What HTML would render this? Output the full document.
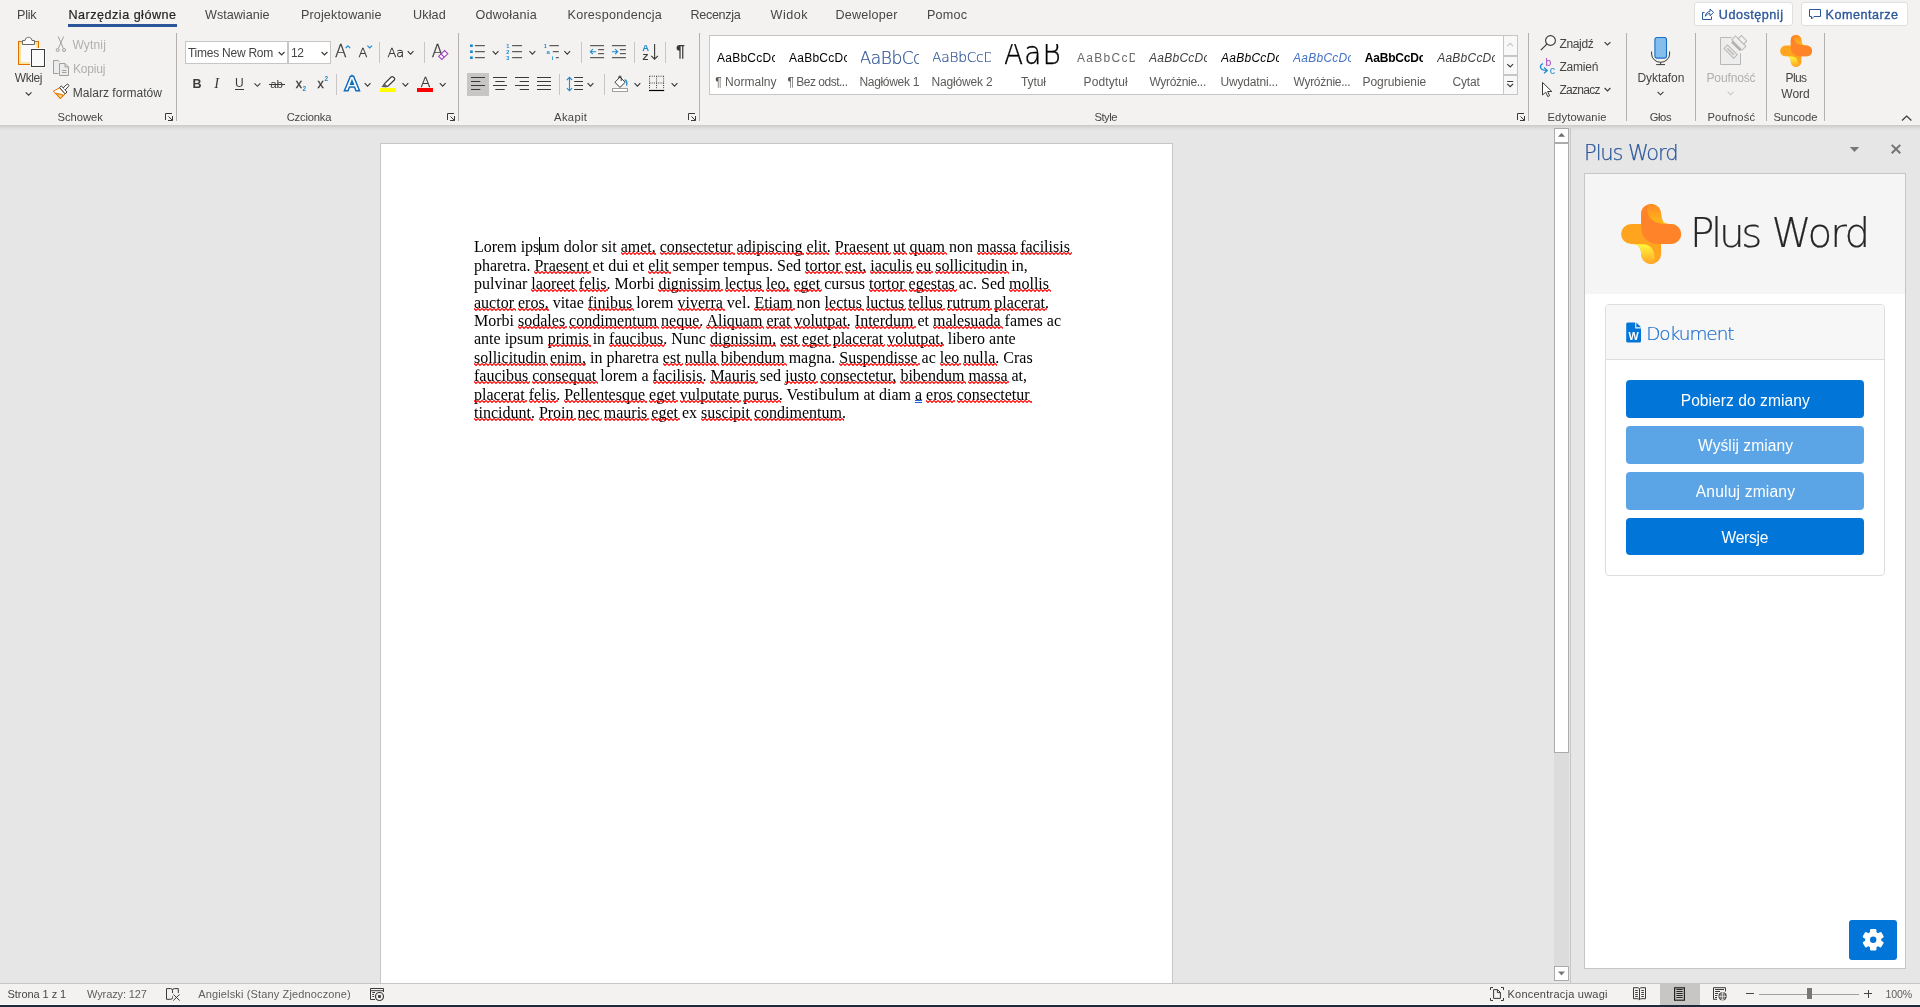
<!DOCTYPE html>
<html lang="pl"><head><meta charset="utf-8"><title>Word - Plus Word</title>
<style>
html,body{margin:0;padding:0;}
body{width:1920px;height:1007px;overflow:hidden;position:relative;background:#e6e6e6;font-family:"Liberation Sans",sans-serif;}
.t{position:absolute;white-space:pre;line-height:20px;}
.root{position:absolute;left:0;top:0;width:1920px;height:1007px;will-change:transform;}
.a{position:absolute;}
.sep{position:absolute;width:1px;background:#c8c6c4;}
.gs{position:absolute;width:1px;top:33px;height:88px;background:#b3b0ad;}
svg{position:absolute;overflow:visible;}
.ln{position:absolute;left:474px;white-space:pre;font-family:"Liberation Serif",serif;font-size:16px;line-height:20px;color:#000;}

.btn{position:absolute;left:1626px;width:238px;height:38px;border-radius:4px;background:#0275d8;}
.btn.d{background:#5ba4e5;}
</style></head><body><div class="root">
<div class="a" style="left:0;top:0;width:1920px;height:125px;background:#f3f2f1"></div>
<div class="a" style="left:0;top:125px;width:1920px;height:1px;background:#cdcccb"></div>
<div class="a" style="left:0;top:126px;width:1920px;height:1px;background:#d3d3d3"></div>
<div class="a" style="left:0;top:127px;width:1920px;height:1px;background:#d9d9d9"></div>
<div class="a" style="left:0;top:128px;width:1920px;height:1px;background:#dedede"></div>
<div class="a" style="left:0;top:129px;width:1920px;height:1px;background:#e2e2e2"></div>
<div class="a" style="left:0;top:130px;width:1920px;height:1px;background:#e4e4e4"></div>
<span class="t" style="left:17.00px;top:4.63px;font-size:12.6px;color:#484644;letter-spacing:-0.266px;">Plik</span>
<span class="t" style="left:205.00px;top:4.63px;font-size:12.6px;color:#484644;letter-spacing:0.012px;">Wstawianie</span>
<span class="t" style="left:301.00px;top:4.63px;font-size:12.6px;color:#484644;letter-spacing:0.116px;">Projektowanie</span>
<span class="t" style="left:413.00px;top:4.63px;font-size:12.6px;color:#484644;letter-spacing:0.124px;">Układ</span>
<span class="t" style="left:475.50px;top:4.63px;font-size:12.6px;color:#484644;letter-spacing:0.217px;">Odwołania</span>
<span class="t" style="left:567.50px;top:4.63px;font-size:12.6px;color:#484644;letter-spacing:0.248px;">Korespondencja</span>
<span class="t" style="left:690.50px;top:4.63px;font-size:12.6px;color:#484644;letter-spacing:-0.324px;">Recenzja</span>
<span class="t" style="left:770.50px;top:4.63px;font-size:12.6px;color:#484644;letter-spacing:0.500px;">Widok</span>
<span class="t" style="left:835.50px;top:4.63px;font-size:12.6px;color:#484644;letter-spacing:0.225px;">Deweloper</span>
<span class="t" style="left:927.00px;top:4.63px;font-size:12.6px;color:#484644;letter-spacing:0.199px;">Pomoc</span>
<span class="t" style="left:68.50px;top:4.63px;font-size:12.6px;color:#252423;letter-spacing:0.493px;-webkit-text-stroke:0.2px #252423;">Narzędzia główne</span>
<div class="a" style="left:68px;top:24px;width:109px;height:3px;background:#2b579a"></div>
<div class="a" style="left:1694px;top:2px;width:99px;height:24px;background:#fff;border:1px solid #e1dfdd;border-radius:3px;box-sizing:border-box"></div>
<div class="a" style="left:1801px;top:2px;width:107px;height:24px;background:#fff;border:1px solid #e1dfdd;border-radius:3px;box-sizing:border-box"></div>
<span class="t" style="left:1718.80px;top:4.63px;font-size:12.6px;color:#2b579a;letter-spacing:0.520px;-webkit-text-stroke:0.35px #2b579a;">Udostępnij</span>
<span class="t" style="left:1825.50px;top:4.63px;font-size:12.6px;color:#2b579a;letter-spacing:0.510px;-webkit-text-stroke:0.35px #2b579a;">Komentarze</span>
<div class="gs" style="left:176px"></div>
<div class="gs" style="left:458px"></div>
<div class="gs" style="left:699px"></div>
<div class="gs" style="left:1528px"></div>
<div class="gs" style="left:1626px"></div>
<div class="gs" style="left:1695px"></div>
<div class="gs" style="left:1766px"></div>
<div class="gs" style="left:1824px"></div>
<div class="sep" style="left:379px;top:42px;height:21px"></div>
<div class="sep" style="left:424px;top:42px;height:21px"></div>
<div class="sep" style="left:581px;top:42px;height:21px"></div>
<div class="sep" style="left:634px;top:42px;height:21px"></div>
<div class="sep" style="left:665px;top:42px;height:21px"></div>
<div class="sep" style="left:336px;top:74px;height:21px"></div>
<div class="sep" style="left:559px;top:74px;height:21px"></div>
<div class="sep" style="left:604px;top:74px;height:21px"></div>
<span class="t" style="left:57.60px;top:107.12px;font-size:11.2px;color:#444;letter-spacing:-0.034px;">Schowek</span>
<span class="t" style="left:286.70px;top:107.12px;font-size:11.2px;color:#444;letter-spacing:-0.188px;">Czcionka</span>
<span class="t" style="left:554.10px;top:107.12px;font-size:11.2px;color:#444;letter-spacing:0.341px;">Akapit</span>
<span class="t" style="left:1094.40px;top:107.12px;font-size:11.2px;color:#444;letter-spacing:-0.444px;">Style</span>
<span class="t" style="left:1547.50px;top:107.12px;font-size:11.2px;color:#444;letter-spacing:0.128px;">Edytowanie</span>
<span class="t" style="left:1649.75px;top:107.12px;font-size:11.2px;color:#444;letter-spacing:-0.422px;">Głos</span>
<span class="t" style="left:1707.50px;top:107.12px;font-size:11.2px;color:#444;letter-spacing:0.121px;">Poufność</span>
<span class="t" style="left:1773.40px;top:107.12px;font-size:11.2px;color:#444;letter-spacing:-0.012px;">Suncode</span>
<span class="t" style="left:14.70px;top:67.84px;font-size:12px;color:#444;letter-spacing:-0.386px;">Wklej</span>
<span class="t" style="left:72.50px;top:34.84px;font-size:12px;color:#b1afad;letter-spacing:0.147px;">Wytnij</span>
<span class="t" style="left:73.00px;top:58.84px;font-size:12px;color:#b1afad;letter-spacing:-0.172px;">Kopiuj</span>
<span class="t" style="left:72.80px;top:82.84px;font-size:12px;color:#444;letter-spacing:0.029px;">Malarz formatów</span>
<div class="a" style="left:185px;top:41px;width:103px;height:23px;background:#fff;border:1px solid #c8c6c4;box-sizing:border-box"></div>
<div class="a" style="left:288px;top:41px;width:43px;height:23px;background:#fff;border:1px solid #c8c6c4;box-sizing:border-box"></div>
<span class="t" style="left:187.90px;top:42.84px;font-size:12px;color:#444;letter-spacing:-0.236px;">Times New Rom</span>
<span class="t" style="left:291.00px;top:42.84px;font-size:12px;color:#444;letter-spacing:-0.359px;">12</span>
<span class="t" style="left:192.40px;top:73.67px;font-size:12.5px;color:#3b3a39;font-weight:700;">B</span>
<span class="t" style="left:214.20px;top:73.11px;font-size:14.5px;color:#3b3a39;font-style:italic;font-family:'Liberation Serif', serif;">I</span>
<span class="t" style="left:235.00px;top:73.34px;font-size:12px;color:#3b3a39;">U</span>
<div class="a" style="left:235px;top:89px;width:9px;height:1px;background:#3b3a39"></div>
<span class="t" style="left:270.30px;top:74.02px;font-size:11.5px;color:#3b3a39;letter-spacing:-0.097px;">ab</span>
<div class="a" style="left:268.8px;top:84px;width:16px;height:1px;background:#3b3a39"></div>
<span class="t" style="left:295.70px;top:73.67px;font-size:12.5px;color:#3b3a39;-webkit-text-stroke:0.3px #3b3a39;">x</span>
<span class="t" style="left:302.50px;top:79.25px;font-size:6.5px;color:#1e8bcd;font-weight:700;">2</span>
<span class="t" style="left:317.50px;top:73.67px;font-size:12.5px;color:#3b3a39;-webkit-text-stroke:0.3px #3b3a39;">x</span>
<span class="t" style="left:324.50px;top:68.75px;font-size:6.5px;color:#1e8bcd;font-weight:700;">2</span>
<span class="t" style="left:334.90px;top:41.12px;font-size:17px;color:#3b3a39;font-weight:200;font-family:'DejaVu Sans', sans-serif;-webkit-text-stroke:0.35px #3b3a39;">A</span>
<span class="t" style="left:358.50px;top:42.50px;font-size:13px;color:#3b3a39;font-weight:200;font-family:'DejaVu Sans', sans-serif;-webkit-text-stroke:0.35px #3b3a39;">A</span>
<span class="t" style="left:387.40px;top:42.50px;font-size:13px;color:#3b3a39;letter-spacing:0.041px;font-weight:200;font-family:'DejaVu Sans', sans-serif;-webkit-text-stroke:0.35px #3b3a39;">Aa</span>
<span class="t" style="left:431.80px;top:41.12px;font-size:17px;color:#3b3a39;font-weight:200;font-family:'DejaVu Sans', sans-serif;-webkit-text-stroke:0.35px #3b3a39;">A</span>
<span class="t" style="left:420.40px;top:71.95px;font-size:14.6px;color:#3b3a39;font-weight:200;font-family:'DejaVu Sans', sans-serif;-webkit-text-stroke:0.35px #3b3a39;">A</span>
<div class="a" style="left:380px;top:88px;width:16px;height:4px;background:#ffff00"></div>
<div class="a" style="left:417px;top:88px;width:16px;height:4px;background:#ff0000"></div>
<div class="a" style="left:467px;top:73px;width:22px;height:23px;background:#c8c6c4"></div>
<span class="t" style="left:642.20px;top:37.71px;font-size:9.5px;color:#1e8bcd;font-weight:700;">A</span>
<span class="t" style="left:642.40px;top:46.71px;font-size:9.5px;color:#3b3a39;font-weight:700;">Z</span>
<span class="t" style="left:676.00px;top:42.46px;font-size:16px;color:#3b3a39;font-weight:700;">¶</span>
<div class="a" style="left:709px;top:35px;width:809px;height:60px;background:#fff;border:1px solid #c8c6c4;box-sizing:border-box"></div>
<div class="a" style="left:717px;top:36px;width:58px;height:34px;overflow:hidden"><span class="t" style="left:-0.10px;top:12.04px;font-size:12px;color:#000;letter-spacing:0.273px;">AaBbCcDc</span></div>
<span class="t" style="left:715.30px;top:71.84px;font-size:12px;color:#5c5a58;letter-spacing:0.008px;">¶ Normalny</span>
<div class="a" style="left:789px;top:36px;width:58px;height:34px;overflow:hidden"><span class="t" style="left:-0.10px;top:12.04px;font-size:12px;color:#000;letter-spacing:0.273px;">AaBbCcDc</span></div>
<span class="t" style="left:787.50px;top:71.84px;font-size:12px;color:#5c5a58;letter-spacing:-0.499px;">¶ Bez odst...</span>
<div class="a" style="left:861px;top:36px;width:58px;height:34px;overflow:hidden"><span class="t" style="left:-1.40px;top:11.68px;font-size:17.1px;color:#2f5496;letter-spacing:-0.529px;font-weight:200;font-family:'DejaVu Sans', sans-serif;-webkit-text-stroke:0.2px #2f5496;">AaBbCc</span></div>
<span class="t" style="left:859.40px;top:71.84px;font-size:12px;color:#5c5a58;letter-spacing:-0.300px;">Nagłówek 1</span>
<div class="a" style="left:933px;top:36px;width:58px;height:34px;overflow:hidden"><span class="t" style="left:-0.90px;top:11.43px;font-size:13.8px;color:#2f5496;letter-spacing:-0.272px;font-weight:200;font-family:'DejaVu Sans', sans-serif;-webkit-text-stroke:0.2px #2f5496;">AaBbCcD</span></div>
<span class="t" style="left:931.50px;top:71.84px;font-size:12px;color:#5c5a58;letter-spacing:-0.161px;">Nagłówek 2</span>
<div class="a" style="left:1005px;top:44px;width:58px;height:26px;overflow:hidden"><span class="t" style="left:-0.70px;top:-0.76px;font-size:31.1px;color:#000;letter-spacing:1.2px;font-weight:200;font-family:'DejaVu Sans', sans-serif;transform:scaleX(0.9);transform-origin:0 0;-webkit-text-stroke:0.35px #000;">AaB</span></div>
<span class="t" style="left:1021.00px;top:71.84px;font-size:12px;color:#5c5a58;letter-spacing:-0.086px;">Tytuł</span>
<div class="a" style="left:1077px;top:36px;width:58px;height:34px;overflow:hidden"><span class="t" style="left:-0.10px;top:12.04px;font-size:12px;color:#6a6a6a;letter-spacing:1.319px;">AaBbCcD</span></div>
<span class="t" style="left:1083.50px;top:71.84px;font-size:12px;color:#5c5a58;letter-spacing:0.127px;">Podtytuł</span>
<div class="a" style="left:1149px;top:36px;width:58px;height:34px;overflow:hidden"><span class="t" style="left:0.00px;top:12.04px;font-size:12px;color:#404040;letter-spacing:0.259px;font-style:italic;">AaBbCcDc</span></div>
<span class="t" style="left:1149.40px;top:71.84px;font-size:12px;color:#5c5a58;letter-spacing:-0.306px;">Wyróżnie...</span>
<div class="a" style="left:1221px;top:36px;width:58px;height:34px;overflow:hidden"><span class="t" style="left:0.00px;top:12.04px;font-size:12px;color:#000;letter-spacing:0.259px;font-style:italic;">AaBbCcDc</span></div>
<span class="t" style="left:1220.60px;top:71.84px;font-size:12px;color:#5c5a58;letter-spacing:-0.186px;">Uwydatni...</span>
<div class="a" style="left:1293px;top:36px;width:58px;height:34px;overflow:hidden"><span class="t" style="left:0.10px;top:12.04px;font-size:12px;color:#4472c4;letter-spacing:0.245px;font-style:italic;">AaBbCcDc</span></div>
<span class="t" style="left:1293.50px;top:71.84px;font-size:12px;color:#5c5a58;letter-spacing:-0.281px;">Wyróżnie...</span>
<div class="a" style="left:1365px;top:36px;width:58px;height:34px;overflow:hidden"><span class="t" style="left:-0.25px;top:12.04px;font-size:12px;color:#000;letter-spacing:-0.181px;font-weight:700;">AaBbCcDc</span></div>
<span class="t" style="left:1362.50px;top:71.84px;font-size:12px;color:#5c5a58;letter-spacing:-0.031px;">Pogrubienie</span>
<div class="a" style="left:1437px;top:36px;width:58px;height:34px;overflow:hidden"><span class="t" style="left:0.25px;top:12.04px;font-size:12px;color:#404040;letter-spacing:0.223px;font-style:italic;">AaBbCcDc</span></div>
<span class="t" style="left:1452.50px;top:71.84px;font-size:12px;color:#5c5a58;letter-spacing:-0.191px;">Cytat</span>
<div class="a" style="left:1503px;top:35px;width:15px;height:21px;background:#f8f8f8;border:1px solid #c8c6c4;box-sizing:border-box"></div>
<div class="a" style="left:1503px;top:56px;width:15px;height:19px;background:#f8f8f8;border:1px solid #c8c6c4;box-sizing:border-box"></div>
<div class="a" style="left:1503px;top:75px;width:15px;height:20px;background:#f8f8f8;border:1px solid #c8c6c4;box-sizing:border-box"></div>
<span class="t" style="left:1559.40px;top:33.84px;font-size:12px;color:#444;letter-spacing:-0.336px;">Znajdź</span>
<span class="t" style="left:1559.40px;top:56.84px;font-size:12px;color:#444;letter-spacing:-0.183px;">Zamień</span>
<span class="t" style="left:1559.40px;top:79.84px;font-size:12px;color:#444;letter-spacing:-0.693px;">Zaznacz</span>
<span class="t" style="left:1637.50px;top:67.84px;font-size:12px;color:#444;letter-spacing:-0.066px;">Dyktafon</span>
<span class="t" style="left:1706.50px;top:67.84px;font-size:12px;color:#b1afad;letter-spacing:-0.135px;">Poufność</span>
<span class="t" style="left:1785.50px;top:67.84px;font-size:12px;color:#444;letter-spacing:-0.581px;">Plus</span>
<span class="t" style="left:1781.30px;top:83.84px;font-size:12px;color:#444;letter-spacing:-0.018px;">Word</span>
<svg style="left:0;top:0" width="1920" height="130"><path d="M165.5 120 V113.5 H172 M168.5 116.5 L172.5 120.5 M172.5 116 V120.5 H168" stroke="#3b3a39" stroke-width="1" fill="none"/><path d="M447.5 120 V113.5 H454 M450.5 116.5 L454.5 120.5 M454.5 116 V120.5 H450" stroke="#3b3a39" stroke-width="1" fill="none"/><path d="M688.5 120 V113.5 H695 M691.5 116.5 L695.5 120.5 M695.5 116 V120.5 H691" stroke="#3b3a39" stroke-width="1" fill="none"/><path d="M1517.5 120 V113.5 H1524 M1520.5 116.5 L1524.5 120.5 M1524.5 116 V120.5 H1520" stroke="#3b3a39" stroke-width="1" fill="none"/><path d="M25.70 92.30 L28.60 95.20 L31.50 92.30" stroke="#3b3a39" stroke-width="1.15" fill="none"/><path d="M278.70 52.00 L281.60 54.90 L284.50 52.00" stroke="#3b3a39" stroke-width="1.15" fill="none"/><path d="M321.60 52.00 L324.50 54.90 L327.40 52.00" stroke="#3b3a39" stroke-width="1.15" fill="none"/><path d="M254.50 83.40 L257.40 86.30 L260.30 83.40" stroke="#3b3a39" stroke-width="1.15" fill="none"/><path d="M407.70 51.20 L410.60 54.10 L413.50 51.20" stroke="#3b3a39" stroke-width="1.15" fill="none"/><path d="M364.70 83.20 L367.60 86.10 L370.50 83.20" stroke="#3b3a39" stroke-width="1.15" fill="none"/><path d="M402.50 83.20 L405.40 86.10 L408.30 83.20" stroke="#3b3a39" stroke-width="1.15" fill="none"/><path d="M439.80 83.20 L442.70 86.10 L445.60 83.20" stroke="#3b3a39" stroke-width="1.15" fill="none"/><path d="M492.70 51.20 L495.60 54.10 L498.50 51.20" stroke="#3b3a39" stroke-width="1.15" fill="none"/><path d="M529.50 51.20 L532.40 54.10 L535.30 51.20" stroke="#3b3a39" stroke-width="1.15" fill="none"/><path d="M564.35 51.20 L567.25 54.10 L570.15 51.20" stroke="#3b3a39" stroke-width="1.15" fill="none"/><path d="M587.60 83.20 L590.50 86.10 L593.40 83.20" stroke="#3b3a39" stroke-width="1.15" fill="none"/><path d="M634.50 83.20 L637.40 86.10 L640.30 83.20" stroke="#3b3a39" stroke-width="1.15" fill="none"/><path d="M671.60 83.20 L674.50 86.10 L677.40 83.20" stroke="#3b3a39" stroke-width="1.15" fill="none"/><path d="M1604.60 42.10 L1607.50 45.00 L1610.40 42.10" stroke="#3b3a39" stroke-width="1.15" fill="none"/><path d="M1604.60 88.00 L1607.50 90.90 L1610.40 88.00" stroke="#3b3a39" stroke-width="1.15" fill="none"/><path d="M1657.60 91.90 L1660.50 94.80 L1663.40 91.90" stroke="#3b3a39" stroke-width="1.15" fill="none"/><path d="M1727.70 91.90 L1730.60 94.80 L1733.50 91.90" stroke="#c8c6c4" stroke-width="1.15" fill="none"/><path d="M1507.30 46.20 L1510.20 43.30 L1513.10 46.20" stroke="#c8c6c4" stroke-width="1.15" fill="none"/><path d="M1507.30 64.10 L1510.20 67.00 L1513.10 64.10" stroke="#3b3a39" stroke-width="1.15" fill="none"/><path d="M1507.2 81.5 H1513.2" stroke="#3b3a39" stroke-width="1"/><path d="M1507.30 83.80 L1510.20 86.70 L1513.10 83.80" stroke="#3b3a39" stroke-width="1.15" fill="none"/><path d="M1902 120.5 L1906.7 116 L1911.4 120.5" stroke="#3b3a39" stroke-width="1.2" fill="none"/><rect x="18.5" y="41.5" width="20" height="23" fill="#fbe3a0" stroke="#e07000"/><rect x="21" y="44.5" width="15" height="17.7" fill="#fafafa"/><path d="M22.5 44.5 H34.5 V40.5 H32 C31.6 38.2 30.2 37.3 28.5 37.3 C26.8 37.3 25.4 38.2 25 40.5 H22.5 Z" fill="#fdfdfd" stroke="#6b6967"/><rect x="30" y="48" width="16" height="20" fill="#fbfbfb"/><rect x="31.5" y="49.5" width="13" height="17" fill="#fafafa" stroke="#3b3a39"/><path d="M58.2 36.5 L63.3 48.3 M63.6 36.5 L58.4 48.3" stroke="#a19f9d" stroke-width="1" fill="none"/><circle cx="57.7" cy="50" r="1.5" fill="none" stroke="#a19f9d"/><circle cx="64" cy="50" r="1.5" fill="none" stroke="#a19f9d"/><path d="M58.5 73.5 H53.5 V60.5 H58 L59.5 62" fill="#ececec" stroke="#a19f9d"/><path d="M59.5 63.5 H65 L68.5 67 V75.5 H59.5 Z" fill="#ececec" stroke="#a19f9d"/><path d="M65 63.5 V67 H68.5 M62 70.5 H66.5 M62 72.5 H66.5" fill="none" stroke="#a19f9d"/><path d="M59.6 87.8 L53.4 91.2 L60.3 98.7 L65.2 94 Z" fill="#fff" stroke="#e07000"/><path d="M55.3 93 L63.3 94.8 L60.3 98.5 Z" fill="#f3a53c" stroke="#e07000" stroke-width="0.8"/><path d="M58.5 95 L62 95.6 L60.4 97.6 Z" fill="#fbe3a0"/><path d="M59.6 87.6 L61.4 85.9 L67 92 L65.2 93.9 Z" fill="#fff" stroke="#3b3a39"/><path d="M63.2 88 L66.5 84.6 a1.3 1.3 0 0 1 1.9 1.9 L65.1 89.9" fill="#fff" stroke="#3b3a39"/><path d="M345.6 48.2 L347.9 45.8 L350.2 48.2" stroke="#1e8bcd" stroke-width="1.2" fill="none"/><path d="M367.4 45.6 L369.7 48 L372 45.6" stroke="#1e8bcd" stroke-width="1.2" fill="none"/><path d="M438.6 56.3 L444.6 50.6 L447.8 53.8 L441.8 59.5 Z" fill="#fff" stroke="#a33fbf" stroke-width="1.1"/><path d="M441 54 L444.3 57.2" stroke="#a33fbf" stroke-width="1.1"/><text transform="translate(345.5,89.5) scale(1.09,1)" font-family="Liberation Sans, sans-serif" font-size="17.8" fill="#fff" stroke="#0f6cbd" stroke-width="2.8" paint-order="stroke" stroke-linejoin="miter">A</text><path d="M350.6 84.6 L352 80.6 L353.4 84.6 Z" fill="#0f6cbd"/><path d="M383.2 86 L384.6 83.6 L391.2 77 a1.4 1.4 0 0 1 2 0 L394.3 78 a1.4 1.4 0 0 1 0 2 L387.6 86.5 L385.6 86.7 Z" fill="#fff" stroke="#3b3a39" stroke-width="1.2"/><path d="M381.4 87 L384.4 83.4 L388 86.6 L385.4 87.2 Z" fill="#605e5c"/><rect x="470" y="44.4" width="2.8" height="2.6" fill="#1e8bcd"/><path d="M474.9 45.699999999999996 H484.9" stroke="#3b3a39"/><rect x="470" y="50.4" width="2.8" height="2.6" fill="#1e8bcd"/><path d="M474.9 51.699999999999996 H484.9" stroke="#3b3a39"/><rect x="470" y="56.4" width="2.8" height="2.6" fill="#1e8bcd"/><path d="M474.9 57.699999999999996 H484.9" stroke="#3b3a39"/><text x="506.3" y="48.2" font-family="Liberation Sans, sans-serif" font-weight="700" font-size="5.6" fill="#1e8bcd">1</text><path d="M512.1 45.7 H522.1" stroke="#3b3a39"/><text x="506.3" y="54.2" font-family="Liberation Sans, sans-serif" font-weight="700" font-size="5.6" fill="#1e8bcd">2</text><path d="M512.1 51.7 H522.1" stroke="#3b3a39"/><text x="506.3" y="60.2" font-family="Liberation Sans, sans-serif" font-weight="700" font-size="5.6" fill="#1e8bcd">3</text><path d="M512.1 57.7 H522.1" stroke="#3b3a39"/><text x="543.8" y="48.2" font-family="Liberation Sans, sans-serif" font-weight="700" font-size="5.6" fill="#1e8bcd">1</text><text x="546.6" y="54.3" font-family="Liberation Sans, sans-serif" font-weight="700" font-size="6" fill="#1e8bcd">a</text><text x="551.8" y="60.3" font-family="Liberation Sans, sans-serif" font-weight="700" font-size="6" fill="#1e8bcd">i</text><path d="M549.4 45.7 H558.8 M552.8 51.7 H558.8 M555.8 57.7 H558.8" stroke="#3b3a39"/><path d="M590.1 45.7 H604.1 M598.1 49.7 H604.1 M598.1 53.7 H604.1 M590.1 57.7 H604.1" stroke="#3b3a39"/><path d="M590.5 51.7 H596.1 M592.9 49.2 L590.3000000000001 51.7 L592.9 54.2" stroke="#1e8bcd" stroke-width="1.1" fill="none"/><path d="M611.9 45.7 H625.9 M619.9 49.7 H625.9 M619.9 53.7 H625.9 M611.9 57.7 H625.9" stroke="#3b3a39"/><path d="M611.9 51.7 H617.5 M615.1 49.2 L617.6999999999999 51.7 L615.1 54.2" stroke="#1e8bcd" stroke-width="1.1" fill="none"/><path d="M654.6 44 V59 M651.3 55.8 L654.6 59.2 L657.9 55.8" stroke="#3b3a39" stroke-width="1.1" fill="none"/><path d="M471 77.5 H485" stroke="#3b3a39"/><path d="M471 81.5 H480.3" stroke="#3b3a39"/><path d="M471 85.5 H485" stroke="#3b3a39"/><path d="M471 89.5 H480.3" stroke="#3b3a39"/><path d="M493 77.5 H507" stroke="#3b3a39"/><path d="M495.3 81.5 H504.7" stroke="#3b3a39"/><path d="M493 85.5 H507" stroke="#3b3a39"/><path d="M495.3 89.5 H504.7" stroke="#3b3a39"/><path d="M515 77.5 H529" stroke="#3b3a39"/><path d="M519.7 81.5 H529" stroke="#3b3a39"/><path d="M515 85.5 H529" stroke="#3b3a39"/><path d="M519.7 89.5 H529" stroke="#3b3a39"/><path d="M537 77.5 H551" stroke="#3b3a39"/><path d="M537 81.5 H551" stroke="#3b3a39"/><path d="M537 85.5 H551" stroke="#3b3a39"/><path d="M537 89.5 H551" stroke="#3b3a39"/><path d="M574.2 77.5 H583" stroke="#3b3a39"/><path d="M574.2 81.5 H583" stroke="#3b3a39"/><path d="M574.2 85.5 H583" stroke="#3b3a39"/><path d="M574.2 89.5 H583" stroke="#3b3a39"/><path d="M569.5 77.6 V90.6 M566.9 80 L569.5 77.4 L572.1 80 M566.9 88.2 L569.5 90.8 L572.1 88.2" stroke="#1e8bcd" stroke-width="1.1" fill="none"/><rect x="612.5" y="88.5" width="15" height="3" fill="#fff" stroke="#a19f9d"/><path d="M614.9 82.3 L620 77 L625.2 82.3 L620 87.4 Z" fill="#fff" stroke="#3b3a39"/><path d="M618.6 79 V77.6 a1.3 1.6 0 0 1 2.6 0 V81" fill="none" stroke="#3b3a39"/><path d="M624.6 79.7 C626.6 80.6 627.3 83 626.6 85.6" fill="none" stroke="#1e8bcd" stroke-width="1.3"/><path d="M649.5 76.2 H664 M649.5 83 H664 M649.5 76.2 V89 M656.6 76.2 V89 M663.6 76.2 V89" stroke="#3b3a39" stroke-width="1" stroke-dasharray="1 1.2" fill="none"/><path d="M649 90.5 H664.2" stroke="#000" stroke-width="1.2"/><circle cx="1550.5" cy="40.5" r="4.9" fill="#f8f8f8" stroke="#3b3a39" stroke-width="1.15"/><path d="M1546.9 44.1 L1540.8 50.2" stroke="#3b3a39" stroke-width="1.2"/><text x="1545.6" y="66" font-family="Liberation Sans, sans-serif" font-size="10.3" fill="#a33fbf">b</text><text x="1549.8" y="73.8" font-family="Liberation Sans, sans-serif" font-size="10.8" fill="#1e8bcd">c</text><path d="M1543 63.5 C1539.4 65.2 1538.8 70.4 1547 70.4 M1544 67.5 L1547.3 70.4 L1544 73.3" stroke="#1e8bcd" stroke-width="1.3" fill="none"/><path d="M1542.5 82.4 V95 L1545.7 92.2 L1547.8 96.6 L1549.6 95.7 L1547.6 91.5 L1551.8 91.5 Z" fill="#fff" stroke="#3b3a39" stroke-width="1"/><rect x="1654.9" y="37.5" width="11.6" height="20.6" rx="2.2" fill="#83beec" stroke="#1b6ec2" stroke-width="1.1"/><path d="M1651.6 51.5 V54 a9 8.3 0 0 0 18 0 V51.5 M1660.6 62.3 V64.6 M1656.2 64.6 H1665" fill="none" stroke="#3b3a39" stroke-width="1"/><rect x="1720.5" y="37.5" width="20" height="27" fill="#ededed"/><path d="M1731.6 37.5 H1720.5 V64.5 H1740.5 V52" fill="none" stroke="#b9b7b5"/><g transform="translate(1730.6,51.65) rotate(45)"><rect x="-6.9" y="-2.5" width="13.8" height="5" fill="#ededed" stroke="#b9b7b5"/><rect x="-4.7" y="-0.8" width="9.4" height="1.6" fill="#bdbbb9"/><rect x="-9" y="-20.3" width="17.4" height="14.5" fill="#f3f2f1"/><rect x="-6.2" y="-9.6" width="12.4" height="2.8" fill="#b3b1af"/><rect x="-7.7" y="-14.6" width="14.8" height="5.4" fill="#efeeed" stroke="#b9b7b5"/><rect x="-3.8" y="-19" width="7.6" height="4.4" fill="#f3f2f1" stroke="#b9b7b5"/></g><path d="M1704.5 12.5 H1702.5 V19.5 H1711.5 V16.5 M1705.3 16.3 C1705.6 13 1707.8 11.6 1710 11.6 V9 L1713.6 12.4 L1710 15.8 V13.6 C1708 13.6 1706.4 14.4 1705.3 16.3 Z" fill="none" stroke="#2b579a" stroke-width="1"/><path d="M1809.5 9.5 H1820.5 V16.5 H1814 L1811.5 19 V16.5 H1809.5 Z" fill="none" stroke="#2b579a" stroke-width="1"/></svg>
<div class="a" style="left:380px;top:143px;width:793px;height:841px;background:#fff;border:1px solid #c6c6c6;border-bottom:none;box-sizing:border-box"></div>
<div class="ln" style="top:236.60px">Lorem ipsum dolor sit <span class="sq">amet,</span> <span class="sq">consectetur</span> <span class="sq">adipiscing</span> <span class="sq">elit</span>. <span class="sq">Praesent</span> <span class="sq">ut</span> <span class="sq">quam</span> non <span class="sq">massa</span> <span class="sq">facilisis</span></div>
<div class="ln" style="top:255.60px">pharetra. <span class="sq">Praesent</span> et dui et <span class="sq">elit</span> semper tempus. Sed <span class="sq">tortor</span> <span class="sq">est,</span> <span class="sq">iaculis</span> <span class="sq">eu</span> <span class="sq">sollicitudin</span> in,</div>
<div class="ln" style="top:273.60px">pulvinar <span class="sq">laoreet</span> <span class="sq">felis</span>. Morbi <span class="sq">dignissim</span> <span class="sq">lectus</span> <span class="sq">leo,</span> <span class="sq">eget</span> cursus <span class="sq">tortor</span> <span class="sq">egestas</span> ac. Sed <span class="sq">mollis</span></div>
<div class="ln" style="top:292.60px"><span class="sq">auctor</span> <span class="sq">eros,</span> vitae <span class="sq">finibus</span> lorem <span class="sq">viverra</span> vel. <span class="sq">Etiam</span> non <span class="sq">lectus</span> <span class="sq">luctus</span> <span class="sq">tellus</span> <span class="sq">rutrum</span> <span class="sq">placerat</span>.</div>
<div class="ln" style="top:310.60px">Morbi <span class="sq">sodales</span> <span class="sq">condimentum</span> <span class="sq">neque</span>. <span class="sq">Aliquam</span> <span class="sq">erat</span> <span class="sq">volutpat</span>. <span class="sq">Interdum</span> et <span class="sq">malesuada</span> fames ac</div>
<div class="ln" style="top:328.60px">ante ipsum <span class="sq">primis</span> in <span class="sq">faucibus</span>. Nunc <span class="sq">dignissim,</span> <span class="sq">est</span> <span class="sq">eget</span> <span class="sq">placerat</span> <span class="sq">volutpat,</span> libero ante</div>
<div class="ln" style="top:347.60px"><span class="sq">sollicitudin</span> <span class="sq">enim,</span> in pharetra <span class="sq">est</span> <span class="sq">nulla</span> <span class="sq">bibendum</span> magna. <span class="sq">Suspendisse</span> ac <span class="sq">leo</span> <span class="sq">nulla</span>. Cras</div>
<div class="ln" style="top:365.60px"><span class="sq">faucibus</span> <span class="sq">consequat</span> lorem a <span class="sq">facilisis</span>. <span class="sq">Mauris</span> sed <span class="sq">justo</span> <span class="sq">consectetur,</span> <span class="sq">bibendum</span> <span class="sq">massa</span> at,</div>
<div class="ln" style="top:384.60px"><span class="sq">placerat</span> <span class="sq">felis</span>. <span class="sq">Pellentesque</span> <span class="sq">eget</span> <span class="sq">vulputate</span> <span class="sq">purus</span>. Vestibulum at diam <span class="db">a</span> <span class="sq">eros</span> <span class="sq">consectetur</span></div>
<div class="ln" style="top:402.60px"><span class="sq">tincidunt</span>. <span class="sq">Proin</span> <span class="sq">nec</span> <span class="sq">mauris</span> <span class="sq">eget</span> ex <span class="sq">suscipit</span> <span class="sq">condimentum</span>.</div>
<div class="a" style="left:539px;top:237px;width:1px;height:18px;background:#000"></div>
<div class="a" style="left:1554px;top:128px;width:15px;height:853px;background:#dcdcdc"></div>
<div class="a" style="left:1554px;top:128px;width:15px;height:15px;background:#fff;border:1px solid #ababab;box-sizing:border-box"></div>
<div class="a" style="left:1554px;top:143px;width:15px;height:610px;background:#fff;border:1px solid #ababab;box-sizing:border-box"></div>
<div class="a" style="left:1554px;top:966px;width:15px;height:15px;background:#fff;border:1px solid #ababab;box-sizing:border-box"></div>
<svg style="left:1554px;top:128px" width="15" height="15"><path d="M4 8.8 L7.5 5 L11 8.8Z" fill="#6d6d6d"/></svg>
<svg style="left:1554px;top:966px" width="15" height="15"><path d="M4 5.5 L7.5 9.5 L11 5.5Z" fill="#777"/></svg>
<div class="a" style="left:1570px;top:128px;width:1px;height:855px;background:#c6c6c6"></div>
<span class="t" style="left:1584.10px;top:142.73px;font-size:21px;color:#2b579a;letter-spacing:-1.113px;font-weight:200;font-family:'DejaVu Sans', sans-serif;-webkit-text-stroke:0.25px #2b579a;">Plus Word</span>
<svg style="left:0;top:0" width="1920" height="200"><path d="M1849.8 147 H1859.2 L1854.5 152.1 Z" fill="#777"/><path d="M1891.7 144.9 L1900.3 153.3 M1900.3 144.9 L1891.7 153.3" stroke="#737373" stroke-width="2" fill="none"/></svg>
<div class="a" style="left:1584px;top:173px;width:322px;height:796px;background:#fff;border:1px solid #c6c6c6;box-sizing:border-box"></div>
<div class="a" style="left:1585px;top:174px;width:320px;height:120px;background:#f5f5f5"></div>
<span class="t" style="left:1690.00px;top:222.89px;font-size:40.5px;color:#262626;letter-spacing:-3.351px;font-weight:200;font-family:'DejaVu Sans', sans-serif;-webkit-text-stroke:0.2px #262626;">Plus</span>
<span class="t" style="left:1771.60px;top:222.89px;font-size:40.5px;color:#262626;letter-spacing:-1.836px;font-weight:200;font-family:'DejaVu Sans', sans-serif;-webkit-text-stroke:0.2px #262626;">Word</span>
<div class="a" style="left:1605px;top:304px;width:280px;height:272px;background:#fff;border:1px solid #dddddd;border-radius:4px;box-sizing:border-box"></div>
<div class="a" style="left:1606px;top:305px;width:278px;height:54px;background:#f7f7f7;border-bottom:1px solid #dddddd;border-radius:3px 3px 0 0"></div>
<span class="t" style="left:1646.20px;top:323.60px;font-size:18.5px;color:#1d6fd2;letter-spacing:-1.061px;font-weight:200;font-family:'DejaVu Sans', sans-serif;-webkit-text-stroke:0.2px #1d6fd2;">Dokument</span>
<div class="btn" style="top:380px"></div>
<span class="t" style="left:1680.70px;top:390.59px;font-size:15.6px;color:#fff;letter-spacing:0.045px;">Pobierz do zmiany</span>
<div class="btn d" style="top:426px"></div>
<span class="t" style="left:1698.00px;top:435.59px;font-size:15.6px;color:#fff;letter-spacing:0.059px;">Wyślij zmiany</span>
<div class="btn d" style="top:472px"></div>
<span class="t" style="left:1695.70px;top:481.59px;font-size:15.6px;color:#fff;letter-spacing:0.185px;">Anuluj zmiany</span>
<div class="btn" style="top:518px;height:37px"></div>
<span class="t" style="left:1721.50px;top:527.59px;font-size:15.6px;color:#fff;letter-spacing:-0.250px;">Wersje</span>
<div class="a" style="left:1849px;top:920px;width:48px;height:40px;border-radius:3px;background:#0275d8"></div>
<svg style="left:0;top:0" width="1920" height="1007"><g transform="translate(1651.1,234) scale(1.0)"><defs>
<linearGradient id="gta" x1="0" y1="0" x2="0" y2="1"><stop offset="0" stop-color="#ff8a28"/><stop offset="1" stop-color="#ffbb18"/></linearGradient>
<linearGradient id="gba" x1="0" y1="0" x2="0" y2="1"><stop offset="0" stop-color="#fff93b"/><stop offset="1" stop-color="#ffa427"/></linearGradient></defs>
<path d="M-10 -20 A10 10 0 0 1 10 -20 Q10 -10 18 -10 L20 -10 A10 10 0 0 1 20 10 L10 10 L10 20 A10 10 0 0 1 -10 20 Q-10 10 -18 10 L-20 10 A10 10 0 0 1 -20 -10 L-10 -10 Z" fill="#ffa41f"/>
<path d="M-2.8 -29.6 A10 10 0 0 1 10 -20 Q10 -10 18 -10 L16.3 -9.5 C-4 -10 -5.5 -22 -2.8 -29.6 Z" fill="url(#gta)"/>
<path d="M-2.8 -29.6 A10 10 0 0 0 -10 -20 L-10 -7 C-10 3 -3 10 7 10 L20 10 A10 10 0 0 0 20 -10 L16.3 -10 C-3.5 -10.5 -5.2 -22 -2.8 -29.6 Z" fill="#ff8429"/>
<path d="M-18 10 Q-10 10 -10 20 A10 10 0 0 0 3.6 29.3 L3.6 24.6 C3.6 15 -1 10.6 -8 10.3 Z" fill="url(#gba)"/>
</g><g transform="translate(1796.1,50.9) scale(0.533)"><defs>
<linearGradient id="gtb" x1="0" y1="0" x2="0" y2="1"><stop offset="0" stop-color="#ff8a28"/><stop offset="1" stop-color="#ffbb18"/></linearGradient>
<linearGradient id="gbb" x1="0" y1="0" x2="0" y2="1"><stop offset="0" stop-color="#fff93b"/><stop offset="1" stop-color="#ffa427"/></linearGradient></defs>
<path d="M-10 -20 A10 10 0 0 1 10 -20 Q10 -10 18 -10 L20 -10 A10 10 0 0 1 20 10 L10 10 L10 20 A10 10 0 0 1 -10 20 Q-10 10 -18 10 L-20 10 A10 10 0 0 1 -20 -10 L-10 -10 Z" fill="#ffa41f"/>
<path d="M-2.8 -29.6 A10 10 0 0 1 10 -20 Q10 -10 18 -10 L16.3 -9.5 C-4 -10 -5.5 -22 -2.8 -29.6 Z" fill="url(#gtb)"/>
<path d="M-2.8 -29.6 A10 10 0 0 0 -10 -20 L-10 -7 C-10 3 -3 10 7 10 L20 10 A10 10 0 0 0 20 -10 L16.3 -10 C-3.5 -10.5 -5.2 -22 -2.8 -29.6 Z" fill="#ff8429"/>
<path d="M-18 10 Q-10 10 -10 20 A10 10 0 0 0 3.6 29.3 L3.6 24.6 C3.6 15 -1 10.6 -8 10.3 Z" fill="url(#gbb)"/>
</g><path d="M1627.7 322.4 h7.5 v6.2 h5.8 v12.5 a1.5 1.5 0 0 1 -1.5 1.5 h-11.8 a1.5 1.5 0 0 1 -1.5 -1.5 v-17.2 a1.5 1.5 0 0 1 1.5 -1.5 z M1636.3 322.4 L1641 327.3 h-4.7 z" fill="#0275d8"/><text x="1628.5" y="339.8" font-family="Liberation Sans, sans-serif" font-weight="700" font-size="10.8" fill="#fff">W</text><g transform="translate(1873.2,939.7)" fill="#fff"><rect x="-3.2" y="-10.7" width="6.4" height="6" rx="1.2" transform="rotate(0)"/><rect x="-3.2" y="-10.7" width="6.4" height="6" rx="1.2" transform="rotate(60)"/><rect x="-3.2" y="-10.7" width="6.4" height="6" rx="1.2" transform="rotate(120)"/><rect x="-3.2" y="-10.7" width="6.4" height="6" rx="1.2" transform="rotate(180)"/><rect x="-3.2" y="-10.7" width="6.4" height="6" rx="1.2" transform="rotate(240)"/><rect x="-3.2" y="-10.7" width="6.4" height="6" rx="1.2" transform="rotate(300)"/><circle r="8.1"/><circle r="3.2" fill="#0275d8"/></g></svg>
<div class="a" style="left:0;top:983px;width:1920px;height:1px;background:#c6c6c6"></div>
<div class="a" style="left:0;top:984px;width:1920px;height:21px;background:#f3f2f1"></div>
<div class="a" style="left:0;top:1004px;width:1920px;height:1px;background:#fbfbfb"></div>
<div class="a" style="left:0;top:1005px;width:1920px;height:2px;background:#1b2b3c"></div>
<span class="t" style="left:7.50px;top:984.19px;font-size:11px;color:#484644;letter-spacing:-0.053px;">Strona 1 z 1</span>
<span class="t" style="left:87.00px;top:984.19px;font-size:11px;color:#605e5c;letter-spacing:-0.105px;">Wyrazy: 127</span>
<span class="t" style="left:198.25px;top:984.19px;font-size:11px;color:#605e5c;letter-spacing:0.140px;">Angielski (Stany Zjednoczone)</span>
<span class="t" style="left:1507.50px;top:984.19px;font-size:11px;color:#484644;letter-spacing:0.234px;">Koncentracja uwagi</span>
<span class="t" style="left:1885.50px;top:983.83px;font-size:10.6px;color:#605e5c;letter-spacing:-0.136px;">100%</span>
<div class="a" style="left:1660px;top:984px;width:40px;height:21px;background:#c8c6c4"></div>
<div class="a" style="left:1746px;top:993px;width:8px;height:1px;background:#444"></div>
<div class="a" style="left:1759px;top:994px;width:100px;height:1px;background:#a19f9d"></div>
<div class="a" style="left:1807px;top:988px;width:5px;height:11px;background:#777"></div>
<div class="a" style="left:1864px;top:993px;width:8px;height:1px;background:#444"></div>
<div class="a" style="left:1867.5px;top:989.5px;width:1px;height:8px;background:#444"></div>
<svg style="left:0;top:0" width="1920" height="1007"><path d="M172.5 993 V990.4 Q172.5 988.6 170.7 988.6 H166.5 V999.3 H170.7 Q172.5 999.3 172.5 997.5 V996.4 M172.5 990.4 Q172.5 988.6 174.3 988.6 H178.3 V993" fill="none" stroke="#3b3a39"/><path d="M173.3 994.4 L179.6 1000.5 M179.6 994.4 L173.3 1000.5" stroke="#3b3a39" stroke-width="1"/><path d="M375 999.5 H370.5 V988.5 H383.5 V992 M370.5 990.7 H383.5 M372.3 992.5 H375 M372.3 994.5 H374 M372.3 996.5 H374" fill="none" stroke="#3b3a39"/><circle cx="379.5" cy="996.5" r="4" fill="none" stroke="#3b3a39" stroke-width="1.2"/><rect x="378.1" y="995.1" width="2.8" height="2.8" fill="#3b3a39"/><path d="M1490.5 990 V987.5 H1493 M1501 987.5 H1503.5 V990 M1503.5 998 V1000.5 H1501 M1493 1000.5 H1490.5 V998" fill="none" stroke="#3b3a39"/><path d="M1493.6 989.6 H1497.6 L1500.4 992.4 V998.4 H1493.6 Z M1497.4 989.8 V992.6 H1500.2" fill="none" stroke="#3b3a39"/><path d="M1639.5 988.8 V999.6 M1639.5 988.6 Q1638.6 987.7 1637 987.7 H1633.5 V998.7 H1637 Q1638.6 998.7 1639.5 999.6 Q1640.4 998.7 1642 998.7 H1645.5 V987.7 H1642 Q1640.4 987.7 1639.5 988.6" fill="none" stroke="#3b3a39"/><path d="M1635.2 990.5 H1637.8 M1641.3 990.5 H1643.9" stroke="#3b3a39"/><path d="M1635.2 992.5 H1637.8 M1641.3 992.5 H1643.9" stroke="#3b3a39"/><path d="M1635.2 994.5 H1637.8 M1641.3 994.5 H1643.9" stroke="#3b3a39"/><path d="M1635.2 996.5 H1637.8 M1641.3 996.5 H1643.9" stroke="#3b3a39"/><rect x="1674.6" y="987.8" width="9.8" height="12.4" fill="none" stroke="#252423" stroke-width="1.2"/><path d="M1676.4 989.5 H1682.7" stroke="#252423"/><path d="M1676.4 991.5 H1682.7" stroke="#252423"/><path d="M1676.4 993.5 H1682.7" stroke="#252423"/><path d="M1676.4 995.5 H1682.7" stroke="#252423"/><path d="M1676.4 997.5 H1682.7" stroke="#252423"/><path d="M1717 999.3 H1713.5 V987.7 H1725.5 V991.5 M1715.1 989.5 H1724 M1715.1 991.5 H1720 M1715.1 993.5 H1718 M1715.1 995.5 H1717.4 M1715.1 997.5 H1717" fill="none" stroke="#3b3a39"/><circle cx="1722.6" cy="996.3" r="4.2" fill="#4a4846"/><path d="M1718.6 996.3 H1726.6 M1722.6 992.3 V1000.3" stroke="#e8e6e4" stroke-width=".9"/><ellipse cx="1722.6" cy="996.3" rx="1.9" ry="4" fill="none" stroke="#e8e6e4" stroke-width=".7"/></svg><svg style="left:0;top:0" width="1920" height="1007"><defs><pattern id="sq" width="4" height="3" patternUnits="userSpaceOnUse"><path d="M-1 -0.5 L2 2.5 L5 -0.5" stroke="#ff0000" stroke-width="1.1" fill="none"/></pattern></defs><g transform="translate(621,252)"><rect x="0" y="0" width="35" height="3" fill="url(#sq)"/></g><g transform="translate(660,252)"><rect x="0" y="0" width="75" height="3" fill="url(#sq)"/></g><g transform="translate(737,252)"><rect x="0" y="0" width="67" height="3" fill="url(#sq)"/></g><g transform="translate(806,252)"><rect x="0" y="0" width="23" height="3" fill="url(#sq)"/></g><g transform="translate(835,252)"><rect x="0" y="0" width="56" height="3" fill="url(#sq)"/></g><g transform="translate(893,252)"><rect x="0" y="0" width="14" height="3" fill="url(#sq)"/></g><g transform="translate(909,252)"><rect x="0" y="0" width="38" height="3" fill="url(#sq)"/></g><g transform="translate(977,252)"><rect x="0" y="0" width="41" height="3" fill="url(#sq)"/></g><g transform="translate(1020,252)"><rect x="0" y="0" width="52" height="3" fill="url(#sq)"/></g><g transform="translate(534,271)"><rect x="0" y="0" width="57" height="3" fill="url(#sq)"/></g><g transform="translate(648,271)"><rect x="0" y="0" width="23" height="3" fill="url(#sq)"/></g><g transform="translate(805,271)"><rect x="0" y="0" width="38" height="3" fill="url(#sq)"/></g><g transform="translate(845,271)"><rect x="0" y="0" width="21" height="3" fill="url(#sq)"/></g><g transform="translate(870,271)"><rect x="0" y="0" width="44" height="3" fill="url(#sq)"/></g><g transform="translate(916,271)"><rect x="0" y="0" width="17" height="3" fill="url(#sq)"/></g><g transform="translate(935,271)"><rect x="0" y="0" width="74" height="3" fill="url(#sq)"/></g><g transform="translate(531,289)"><rect x="0" y="0" width="46" height="3" fill="url(#sq)"/></g><g transform="translate(579,289)"><rect x="0" y="0" width="29" height="3" fill="url(#sq)"/></g><g transform="translate(658,289)"><rect x="0" y="0" width="65" height="3" fill="url(#sq)"/></g><g transform="translate(725,289)"><rect x="0" y="0" width="39" height="3" fill="url(#sq)"/></g><g transform="translate(766,289)"><rect x="0" y="0" width="24" height="3" fill="url(#sq)"/></g><g transform="translate(794,289)"><rect x="0" y="0" width="28" height="3" fill="url(#sq)"/></g><g transform="translate(869,289)"><rect x="0" y="0" width="38" height="3" fill="url(#sq)"/></g><g transform="translate(909,289)"><rect x="0" y="0" width="48" height="3" fill="url(#sq)"/></g><g transform="translate(1009,289)"><rect x="0" y="0" width="42" height="3" fill="url(#sq)"/></g><g transform="translate(474,308)"><rect x="0" y="0" width="42" height="3" fill="url(#sq)"/></g><g transform="translate(518,308)"><rect x="0" y="0" width="31" height="3" fill="url(#sq)"/></g><g transform="translate(588,308)"><rect x="0" y="0" width="46" height="3" fill="url(#sq)"/></g><g transform="translate(678,308)"><rect x="0" y="0" width="47" height="3" fill="url(#sq)"/></g><g transform="translate(754,308)"><rect x="0" y="0" width="41" height="3" fill="url(#sq)"/></g><g transform="translate(825,308)"><rect x="0" y="0" width="39" height="3" fill="url(#sq)"/></g><g transform="translate(866,308)"><rect x="0" y="0" width="40" height="3" fill="url(#sq)"/></g><g transform="translate(908,308)"><rect x="0" y="0" width="37" height="3" fill="url(#sq)"/></g><g transform="translate(947,308)"><rect x="0" y="0" width="45" height="3" fill="url(#sq)"/></g><g transform="translate(994,308)"><rect x="0" y="0" width="53" height="3" fill="url(#sq)"/></g><g transform="translate(518,326)"><rect x="0" y="0" width="49" height="3" fill="url(#sq)"/></g><g transform="translate(569,326)"><rect x="0" y="0" width="90" height="3" fill="url(#sq)"/></g><g transform="translate(661,326)"><rect x="0" y="0" width="40" height="3" fill="url(#sq)"/></g><g transform="translate(706,326)"><rect x="0" y="0" width="58" height="3" fill="url(#sq)"/></g><g transform="translate(766,326)"><rect x="0" y="0" width="26" height="3" fill="url(#sq)"/></g><g transform="translate(794,326)"><rect x="0" y="0" width="55" height="3" fill="url(#sq)"/></g><g transform="translate(855,326)"><rect x="0" y="0" width="61" height="3" fill="url(#sq)"/></g><g transform="translate(933,326)"><rect x="0" y="0" width="70" height="3" fill="url(#sq)"/></g><g transform="translate(548,344)"><rect x="0" y="0" width="43" height="3" fill="url(#sq)"/></g><g transform="translate(609,344)"><rect x="0" y="0" width="56" height="3" fill="url(#sq)"/></g><g transform="translate(710,344)"><rect x="0" y="0" width="66" height="3" fill="url(#sq)"/></g><g transform="translate(780,344)"><rect x="0" y="0" width="20" height="3" fill="url(#sq)"/></g><g transform="translate(802,344)"><rect x="0" y="0" width="29" height="3" fill="url(#sq)"/></g><g transform="translate(833,344)"><rect x="0" y="0" width="52" height="3" fill="url(#sq)"/></g><g transform="translate(887,344)"><rect x="0" y="0" width="57" height="3" fill="url(#sq)"/></g><g transform="translate(474,363)"><rect x="0" y="0" width="74" height="3" fill="url(#sq)"/></g><g transform="translate(550,363)"><rect x="0" y="0" width="36" height="3" fill="url(#sq)"/></g><g transform="translate(663,363)"><rect x="0" y="0" width="20" height="3" fill="url(#sq)"/></g><g transform="translate(685,363)"><rect x="0" y="0" width="34" height="3" fill="url(#sq)"/></g><g transform="translate(721,363)"><rect x="0" y="0" width="66" height="3" fill="url(#sq)"/></g><g transform="translate(839,363)"><rect x="0" y="0" width="81" height="3" fill="url(#sq)"/></g><g transform="translate(940,363)"><rect x="0" y="0" width="21" height="3" fill="url(#sq)"/></g><g transform="translate(963,363)"><rect x="0" y="0" width="34" height="3" fill="url(#sq)"/></g><g transform="translate(474,381)"><rect x="0" y="0" width="56" height="3" fill="url(#sq)"/></g><g transform="translate(532,381)"><rect x="0" y="0" width="66" height="3" fill="url(#sq)"/></g><g transform="translate(653,381)"><rect x="0" y="0" width="51" height="3" fill="url(#sq)"/></g><g transform="translate(710,381)"><rect x="0" y="0" width="48" height="3" fill="url(#sq)"/></g><g transform="translate(785,381)"><rect x="0" y="0" width="33" height="3" fill="url(#sq)"/></g><g transform="translate(820,381)"><rect x="0" y="0" width="76" height="3" fill="url(#sq)"/></g><g transform="translate(900,381)"><rect x="0" y="0" width="66" height="3" fill="url(#sq)"/></g><g transform="translate(968,381)"><rect x="0" y="0" width="41" height="3" fill="url(#sq)"/></g><g transform="translate(474,400)"><rect x="0" y="0" width="53" height="3" fill="url(#sq)"/></g><g transform="translate(529,400)"><rect x="0" y="0" width="29" height="3" fill="url(#sq)"/></g><g transform="translate(564,400)"><rect x="0" y="0" width="83" height="3" fill="url(#sq)"/></g><g transform="translate(649,400)"><rect x="0" y="0" width="29" height="3" fill="url(#sq)"/></g><g transform="translate(680,400)"><rect x="0" y="0" width="61" height="3" fill="url(#sq)"/></g><g transform="translate(743,400)"><rect x="0" y="0" width="38" height="3" fill="url(#sq)"/></g><rect x="915" y="400" width="7" height="1" fill="#2860d8"/><rect x="915" y="402" width="7" height="1" fill="#2860d8"/><g transform="translate(926,400)"><rect x="0" y="0" width="29" height="3" fill="url(#sq)"/></g><g transform="translate(957,400)"><rect x="0" y="0" width="75" height="3" fill="url(#sq)"/></g><g transform="translate(474,418)"><rect x="0" y="0" width="59" height="3" fill="url(#sq)"/></g><g transform="translate(539,418)"><rect x="0" y="0" width="37" height="3" fill="url(#sq)"/></g><g transform="translate(578,418)"><rect x="0" y="0" width="24" height="3" fill="url(#sq)"/></g><g transform="translate(604,418)"><rect x="0" y="0" width="45" height="3" fill="url(#sq)"/></g><g transform="translate(651,418)"><rect x="0" y="0" width="29" height="3" fill="url(#sq)"/></g><g transform="translate(701,418)"><rect x="0" y="0" width="51" height="3" fill="url(#sq)"/></g><g transform="translate(754,418)"><rect x="0" y="0" width="90" height="3" fill="url(#sq)"/></g></svg>
</div></body></html>
